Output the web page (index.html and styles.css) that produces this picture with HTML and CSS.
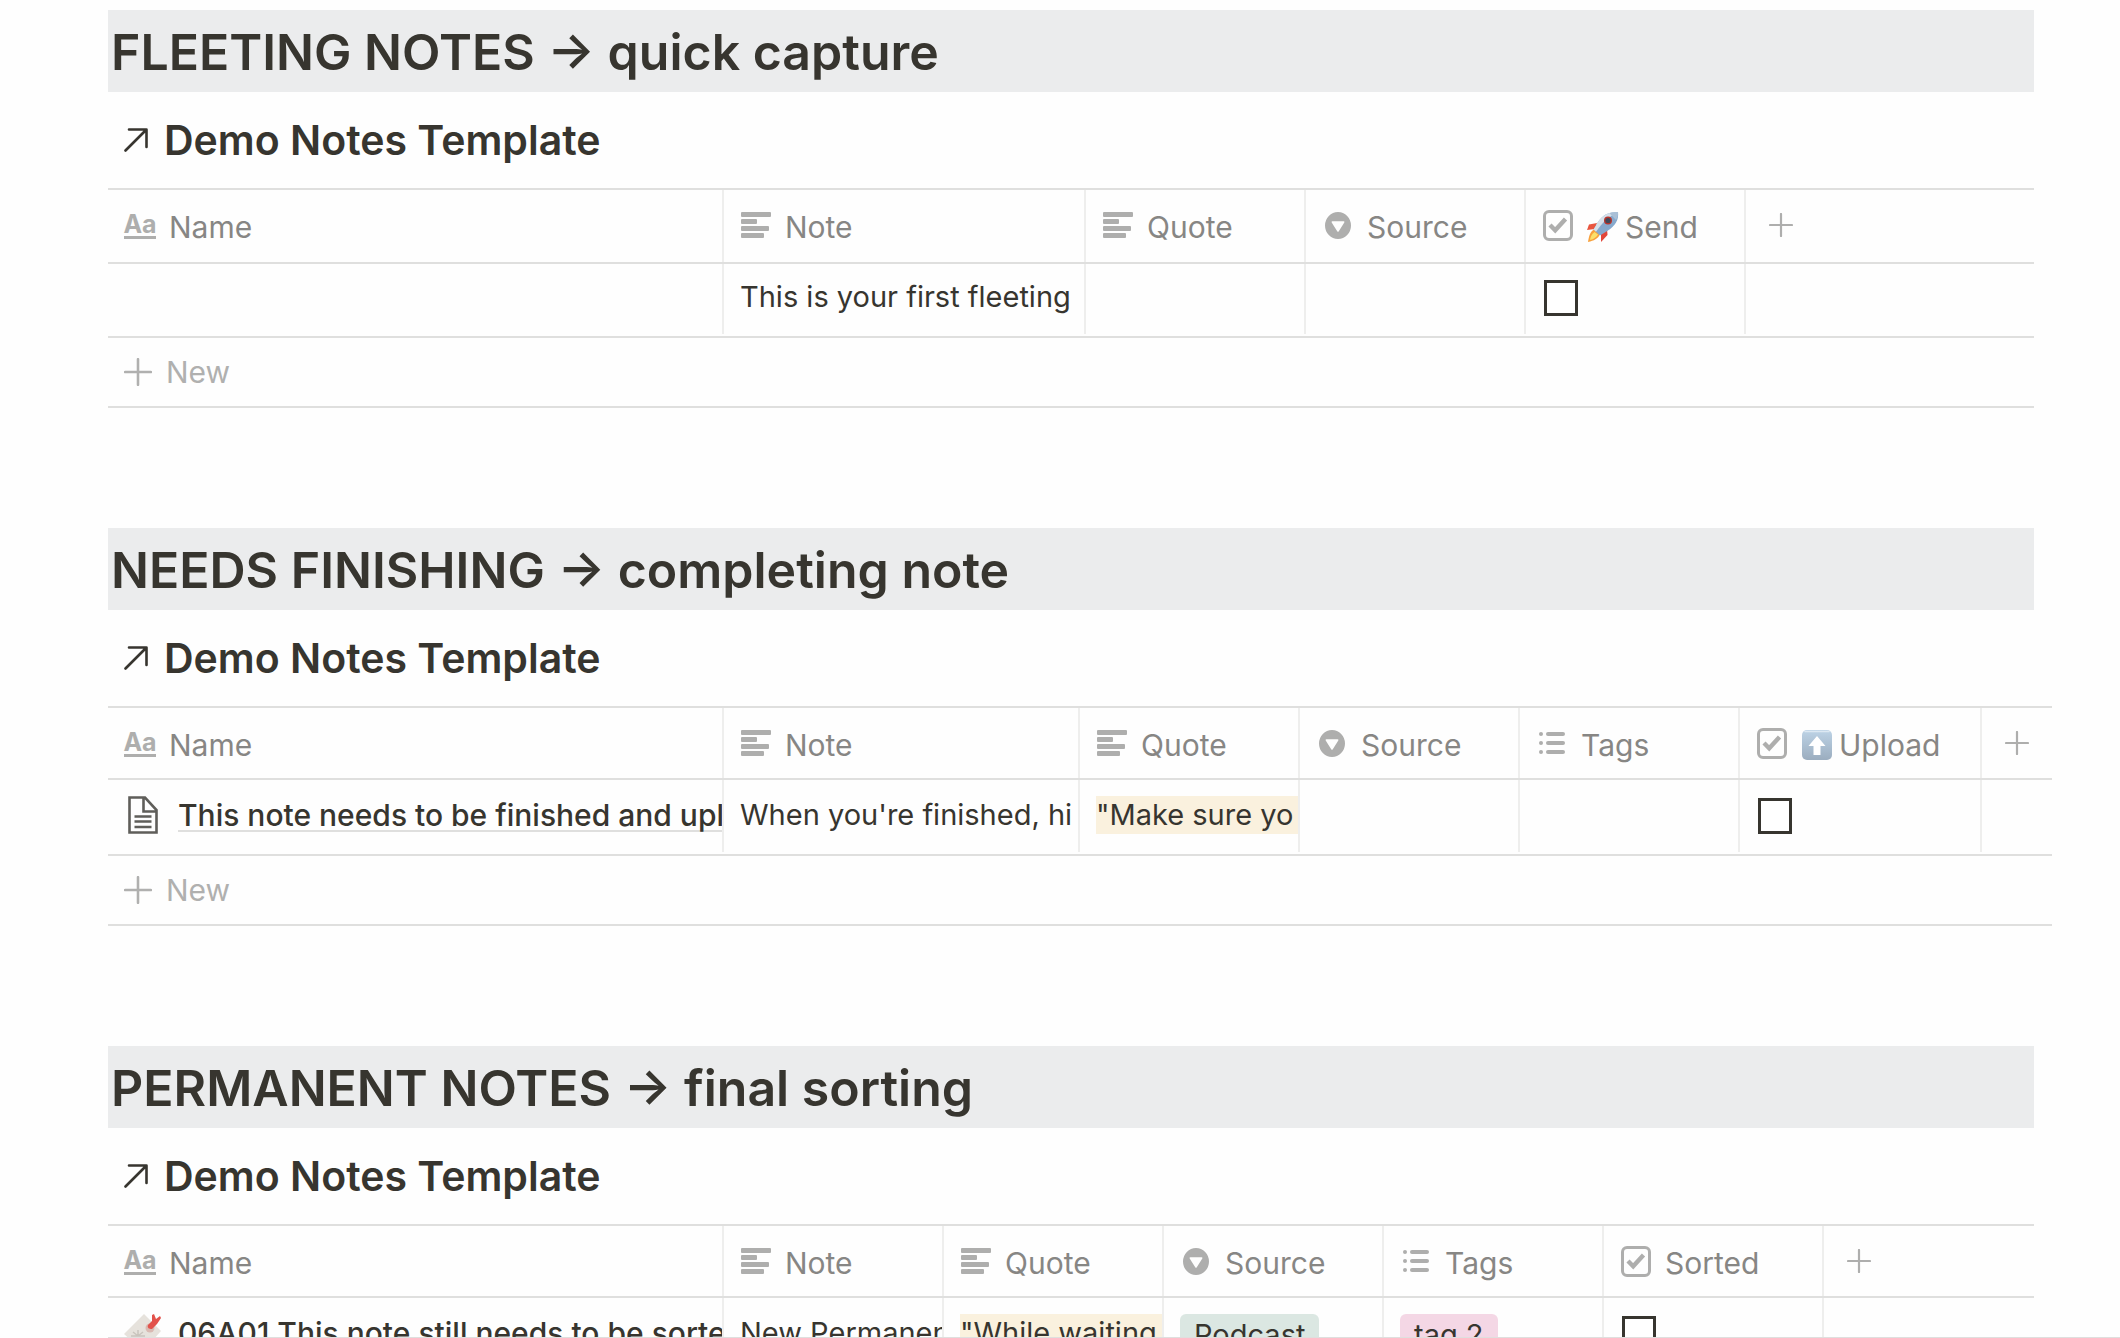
FILE: index.html
```html
<!DOCTYPE html>
<html lang="en">
<head>
    <meta charset="UTF-8">
    <meta name="viewport" content="width=device-width, initial-scale=1.0">
    <title>Notes</title>
    <link rel="stylesheet" href="styles.css">
</head>
<body>

    <!-- Shared icons -->
    <svg class="sprite" aria-hidden="true">
        <symbol id="icon-link" viewBox="0 0 24 24">
            <path d="M1.5 22.5 22 2M5 1.5h17.5V19" fill="none" stroke="currentColor" stroke-width="2.6" stroke-linecap="round" stroke-linejoin="round"/>
        </symbol>
        <symbol id="icon-text" viewBox="0 0 30 26">
            <rect width="30" height="5" rx="1"/>
            <rect y="7" width="16" height="5" rx="1"/>
            <rect y="14" width="28" height="5" rx="1"/>
            <rect y="21" width="23" height="5" rx="1"/>
        </symbol>
        <symbol id="icon-select" viewBox="0 0 26 27">
            <path fill-rule="evenodd" d="M13 0a13 13.5 0 1 1 0 27a13 13.5 0 1 1 0-27zM7.4 9.2a.8.8 0 0 0-.7 1.2l5.5 8.8a1 1 0 0 0 1.6 0l5.5-8.8a.8.8 0 0 0-.7-1.2z"/>
        </symbol>
        <symbol id="icon-multi" viewBox="0 0 26 22">
            <rect width="4" height="4" rx="2"/>
            <rect y="9" width="4" height="4" rx="2"/>
            <rect y="18" width="4" height="4" rx="2"/>
            <rect x="7" width="19" height="4" rx="2"/>
            <rect x="7" y="9" width="19" height="4" rx="2"/>
            <rect x="7" y="18" width="19" height="4" rx="2"/>
        </symbol>
        <symbol id="icon-check" viewBox="0 0 30 31">
            <rect x="1.5" y="1.5" width="27" height="28" rx="4.5" fill="none" stroke="currentColor" stroke-width="3"/>
            <path d="m7 15 5.2 5.2L22.5 9" fill="none" stroke="currentColor" stroke-width="4.4"/>
        </symbol>
        <symbol id="icon-plus" viewBox="0 0 24 24">
            <path d="M12 1v22M1 12h22" fill="none" stroke="currentColor" stroke-width="2.2" stroke-linecap="round"/>
        </symbol>
        <symbol id="icon-page" viewBox="0 0 30 38">
            <path d="M1.5 1.5H17L28.5 14V36.5H1.5zM15.5 2V15.5H28M6.5 20.5h17M6.5 25.5h17M6.5 31h17" fill="none" stroke="currentColor" stroke-width="2.6"/>
        </symbol>
    </svg>

    <main class="page">

        <!-- Fleeting notes -->
        <section class="block">
            <h1 class="banner">FLEETING NOTES → quick capture</h1>
            <h2 class="linked"><svg class="linked-icon"><use href="#icon-link"/></svg><a href="#">Demo Notes Template</a></h2>
            <table class="notes roomy-head">
                <colgroup>
                    <col class="col-name"><col class="col-note-wide"><col class="col-field"><col class="col-field"><col class="col-field"><col>
                </colgroup>
                <thead>
                    <tr>
                        <th><div class="head"><span class="slot aa">Aa</span>Name</div></th>
                        <th><div class="head"><span class="slot"><svg class="i-text"><use href="#icon-text"/></svg></span>Note</div></th>
                        <th><div class="head"><span class="slot"><svg class="i-text"><use href="#icon-text"/></svg></span>Quote</div></th>
                        <th><div class="head"><span class="slot"><svg class="i-select"><use href="#icon-select"/></svg></span>Source</div></th>
                        <th>
                            <div class="head">
                                <span class="slot"><svg class="i-check"><use href="#icon-check"/></svg></span>
                                <svg class="emoji" viewBox="0 0 32 32">
                                    <path d="M10 12 2 13.5 0 19l8-1z" fill="#e8553f"/>
                                    <path d="M14 22 20 17.5 20.5 24 14 31z" fill="#e2463a"/>
                                    <path d="M8 18c-5 2-6 7-7 13 6-1.5 10-3 12-8z" fill="#f8a13c"/>
                                    <path d="M7.5 21c-3 2-4 5-4.5 8 4-1 6-2.5 8-5.5z" fill="#fbe06a"/>
                                    <path d="M31 1c-9-.5-15.5 3-20 10l-4.5 7.5 6.5 6 8-5C28 15 32 9 31 1z" fill="#86a9cd"/>
                                    <path d="M31 1c-9-.5-15.5 3-20 10l-4.5 7.5 2.5 2.3C15 12 21 6 31 1z" fill="#d5e0ea"/>
                                    <path d="M31 1c-3.5-.2-6 .3-8.500 1.200L29 9c1.500-2.500 2.200-5 2-8z" fill="#a9bfd6"/>
                                    <circle cx="21" cy="9.5" r="4" fill="#b7352d"/>
                                    <circle cx="21" cy="9.5" r="2.6" fill="#40495a"/>
                                </svg>
                                <span class="after-emoji">Send</span>
                            </div>
                        </th>
                        <th><div class="head last"><button class="add" aria-label="Add column"><svg class="i-add"><use href="#icon-plus"/></svg></button></div></th>
                    </tr>
                </thead>
                <tbody>
                    <tr>
                        <td><div class="cell"></div></td>
                        <td><div class="cell">This is your first fleeting</div></td>
                        <td><div class="cell"></div></td>
                        <td><div class="cell"></div></td>
                        <td><div class="cell"><input type="checkbox" class="tick" aria-label="Send"></div></td>
                        <td><div class="cell last"></div></td>
                    </tr>
                </tbody>
            </table>
            <button class="new-row"><svg class="i-new"><use href="#icon-plus"/></svg>New</button>
        </section>

        <!-- Needs finishing -->
        <section class="block">
            <h1 class="banner">NEEDS FINISHING → completing note</h1>
            <h2 class="linked"><svg class="linked-icon"><use href="#icon-link"/></svg><a href="#">Demo Notes Template</a></h2>
            <div class="wide">
                <table class="notes">
                    <colgroup>
                        <col class="col-name"><col class="col-note"><col class="col-field"><col class="col-field"><col class="col-field"><col class="col-upload"><col>
                    </colgroup>
                    <thead>
                        <tr>
                            <th><div class="head"><span class="slot aa">Aa</span>Name</div></th>
                            <th><div class="head"><span class="slot"><svg class="i-text"><use href="#icon-text"/></svg></span>Note</div></th>
                            <th><div class="head"><span class="slot"><svg class="i-text"><use href="#icon-text"/></svg></span>Quote</div></th>
                            <th><div class="head"><span class="slot"><svg class="i-select"><use href="#icon-select"/></svg></span>Source</div></th>
                            <th><div class="head"><span class="slot"><svg class="i-multi"><use href="#icon-multi"/></svg></span>Tags</div></th>
                            <th>
                                <div class="head">
                                    <span class="slot"><svg class="i-check"><use href="#icon-check"/></svg></span>
                                    <svg class="emoji" viewBox="0 0 32 32">
                                        <defs>
                                            <linearGradient id="key" x1="0" y1="0" x2="0" y2="1">
                                                <stop offset="0" stop-color="#bdd3e6"/>
                                                <stop offset="1" stop-color="#9badbf"/>
                                            </linearGradient>
                                        </defs>
                                        <rect x="1" y="1" width="30" height="30" rx="5" fill="url(#key)"/>
                                        <path d="M4 2.5h24" stroke="#dce8f2" stroke-width="1.5" stroke-linecap="round"/>
                                        <path d="M16 7 24.5 17H19.5V26h-7V17h-5z" fill="#fff"/>
                                    </svg>
                                    <span class="after-emoji">Upload</span>
                                </div>
                            </th>
                            <th><div class="head last"><button class="add" aria-label="Add column"><svg class="i-add"><use href="#icon-plus"/></svg></button></div></th>
                        </tr>
                    </thead>
                    <tbody>
                        <tr>
                            <td><div class="cell title"><svg class="i-page"><use href="#icon-page"/></svg><a href="#">This note needs to be finished and upl</a></div></td>
                            <td><div class="cell">When you're finished, hi</div></td>
                            <td><div class="cell"><mark>"Make sure yo</mark></div></td>
                            <td><div class="cell"></div></td>
                            <td><div class="cell"></div></td>
                            <td><div class="cell"><input type="checkbox" class="tick" aria-label="Upload"></div></td>
                            <td><div class="cell last"></div></td>
                        </tr>
                    </tbody>
                </table>
                <button class="new-row"><svg class="i-new"><use href="#icon-plus"/></svg>New</button>
            </div>
        </section>

        <!-- Permanent notes -->
        <section class="block">
            <h1 class="banner">PERMANENT NOTES → final sorting</h1>
            <h2 class="linked"><svg class="linked-icon"><use href="#icon-link"/></svg><a href="#">Demo Notes Template</a></h2>
            <table class="notes">
                <colgroup>
                    <col class="col-name"><col class="col-field"><col class="col-field"><col class="col-field"><col class="col-field"><col class="col-field"><col>
                </colgroup>
                <thead>
                    <tr>
                        <th><div class="head"><span class="slot aa">Aa</span>Name</div></th>
                        <th><div class="head"><span class="slot"><svg class="i-text"><use href="#icon-text"/></svg></span>Note</div></th>
                        <th><div class="head"><span class="slot"><svg class="i-text"><use href="#icon-text"/></svg></span>Quote</div></th>
                        <th><div class="head"><span class="slot"><svg class="i-select"><use href="#icon-select"/></svg></span>Source</div></th>
                        <th><div class="head"><span class="slot"><svg class="i-multi"><use href="#icon-multi"/></svg></span>Tags</div></th>
                        <th><div class="head"><span class="slot"><svg class="i-check"><use href="#icon-check"/></svg></span>Sorted</div></th>
                        <th><div class="head last"><button class="add" aria-label="Add column"><svg class="i-add"><use href="#icon-plus"/></svg></button></div></th>
                    </tr>
                </thead>
                <tbody>
                    <tr>
                        <td>
                            <div class="cell title">
                                <svg class="i-page i-pin" viewBox="0 0 38 38">
                                    <path d="M20 0 37 17 19 37 0 20z" fill="#e6e2dc"/>
                                    <path d="M14 22v-6M14 22l-5-4M14 22l5-4M14 22H7M14 22h7" stroke="#c9c4bd" stroke-width="1.5"/>
                                    <circle cx="26" cy="14" r="4.5" fill="#d9b9b2"/>
                                    <path d="m24 11 4-4V1l2-1 2 5 4-3 1 2-4 6-5 5c-3 0-5-1-4-4z" fill="#e2524b"/>
                                </svg>
                                <a href="#">06A01 This note still needs to be sorte</a>
                            </div>
                        </td>
                        <td><div class="cell">New Permanen</div></td>
                        <td><div class="cell"><mark>"While waiting</mark></div></td>
                        <td><div class="cell"><span class="tag green">Podcast</span></div></td>
                        <td><div class="cell"><span class="tag pink">tag 2</span></div></td>
                        <td><div class="cell"><input type="checkbox" class="tick" aria-label="Sorted"></div></td>
                        <td><div class="cell last"></div></td>
                    </tr>
                </tbody>
            </table>
        </section>

    </main>

</body>
</html>
```
FILE: styles.css
```css
* {
    box-sizing: border-box;
}

/* Basic styles */
body {
    margin: 0;
    background-color: #fefefe;
    color: #37352f;
    font-family: Inter, "Liberation Sans", sans-serif;
    font-size: 30px;
    line-height: 38px;
}

a {
    color: inherit;
    text-decoration: none;
}

button {
    padding: 0;
    border: none;
    background: none;
    font: inherit;
    cursor: pointer;
}

svg {
    display: block;
    flex: none;
    fill: currentColor;
}

.sprite {
    position: absolute;
    width: 0;
    height: 0;
}

.page {
    height: 100vh;
    margin-left: 108px;
    padding: 10px 86px 0 0;
    border-bottom: 1px solid #dfdfde;
    overflow: hidden;
}

.block {
    margin-bottom: 120px;
}

/* Section headings */
.banner {
    margin: 0;
    padding: 11px 4px 9px 3px;
    background-color: #ebeced;
    font-size: 50px;
    font-weight: 600;
    line-height: 62px;
}

.linked {
    display: flex;
    align-items: center;
    gap: 16px;
    margin: 0;
    padding: 24px 16px;
    font-size: 41px;
    font-weight: 600;
    line-height: 48px;
}

.linked-icon {
    width: 24px;
    height: 24px;
}

/* Notes tables */
.notes {
    width: 100%;
    table-layout: fixed;
    border-collapse: separate;
    border-spacing: 0;
    border-top: 2px solid #dfdfde;
}

.col-name {
    width: 616px;
}

.col-note-wide {
    width: 362px;
}

.col-note {
    width: 356px;
}

.col-field {
    width: 220px;
}

.col-upload {
    width: 242px;
}

/* This table runs a little past the page column */
.wide {
    margin-right: -18px;
}

th,
td {
    padding: 0;
    border-bottom: 2px solid #dfdfde;
    text-align: left;
    font-weight: 400;
}

td {
    padding-bottom: 2px;
}

.head {
    display: flex;
    align-items: center;
    height: 70px;
    padding: 4px 0 0 16px;
    border-right: 2px solid #eeeeed;
    color: #878684;
}

.roomy-head .head {
    height: 72px;
    padding-bottom: 2px;
}

.cell {
    height: 72px;
    padding: 16px 0 0 16px;
    border-right: 2px solid #eeeeed;
    overflow: hidden;
    font-size: 29px;
    white-space: nowrap;
}

.roomy-head .cell {
    height: 70px;
    padding-top: 14px;
}

.head.last,
.cell.last {
    border-right: none;
}

.slot {
    display: flex;
    justify-content: center;
    width: 32px;
    margin: 0 13px 4px 0;
    color: #aeaead;
}

.aa {
    border-bottom: 3px solid #aeaead;
    font-size: 25px;
    font-weight: 700;
    line-height: 24px;
}

.i-text {
    width: 30px;
    height: 26px;
}

.i-select {
    width: 26px;
    height: 27px;
}

.i-multi {
    width: 26px;
    height: 22px;
}

.i-check {
    width: 30px;
    height: 31px;
}

.emoji {
    width: 32px;
    height: 32px;
}

.after-emoji {
    margin-left: 6px;
}

.add {
    margin: 0 0 4px 7px;
    color: #aeaead;
}

.i-add {
    width: 24px;
    height: 24px;
}

.title {
    display: flex;
    align-items: flex-start;
    font-size: 30px;
    font-weight: 500;
}

.title a {
    text-decoration: underline 2px #dfdfde;
    text-decoration-skip-ink: none;
    text-underline-offset: 4px;
}

.i-page {
    width: 30px;
    height: 38px;
    margin: 0 20px 0 4px;
    color: #5f5e5a;
}

.i-pin {
    width: 38px;
    margin: 0 16px 0 0;
}

mark {
    display: block;
    background-color: #faf1de;
    color: inherit;
}

.tick {
    appearance: none;
    display: block;
    width: 34px;
    height: 36px;
    margin: 2px 0 0 2px;
    border: 3px solid #37352f;
    background-color: #fff;
}

.tag {
    display: block;
    width: max-content;
    padding: 0 14px;
    border-radius: 6px;
    line-height: 42px;
}

.green {
    background-color: #dbe7e2;
}

.pink {
    background-color: #f4d7e5;
}

.new-row {
    display: flex;
    align-items: center;
    gap: 14px;
    width: 100%;
    height: 70px;
    padding: 0 16px;
    border-bottom: 2px solid #dfdfde;
    color: #b0b0af;
}

.i-new {
    width: 28px;
    height: 28px;
}
```
